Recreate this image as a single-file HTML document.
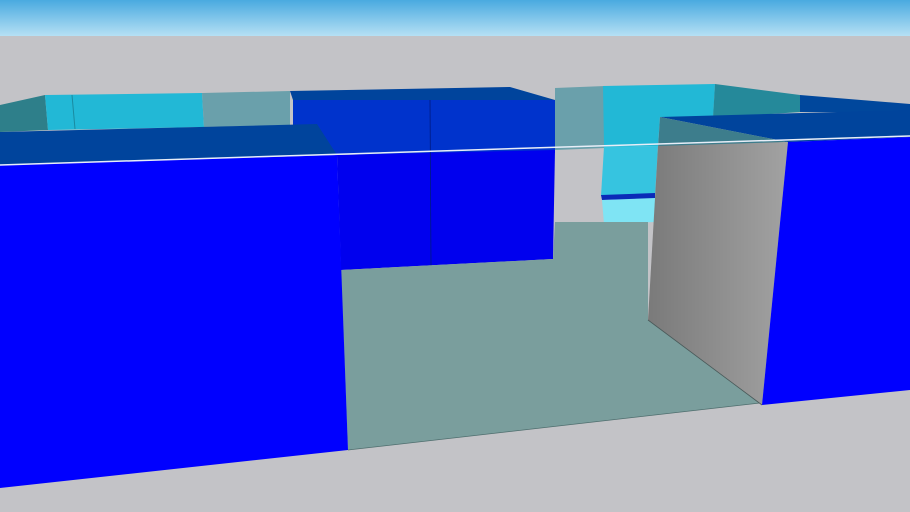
<!DOCTYPE html>
<html><head><style>html,body{margin:0;padding:0;width:910px;height:512px;overflow:hidden;background:#c3c3c7}</style></head>
<body>
<svg width="910" height="512" viewBox="0 0 910 512" xmlns="http://www.w3.org/2000/svg">
<defs>
<linearGradient id="sky" x1="0" y1="0" x2="0" y2="1"><stop offset="0" stop-color="#4aaae0"/><stop offset="1" stop-color="#b6e0f4"/></linearGradient>
<linearGradient id="gs" x1="0" y1="0" x2="1" y2="0"><stop offset="0" stop-color="#7a7a7a"/><stop offset="1" stop-color="#a2a2a2"/></linearGradient>
</defs>
<rect x="0" y="0" width="910" height="36" fill="url(#sky)"/>
<rect x="0" y="36" width="910" height="476" fill="#c3c3c7"/>
<!-- back walls -->
<polygon points="0,105 45,95 48,130 0,132" fill="#2e7f8a"/>
<polygon points="45,95 202,93 204,127 48,130" fill="#22b8d6"/>
<line x1="72" y1="95" x2="75" y2="129" stroke="#1a8aa0" stroke-width="1"/>
<polygon points="202,93 290,91 290,125 204,127" fill="#6aa0ab"/>
<polygon points="555,88 605,86 605,153 555,153" fill="#6aa0ab"/>
<polygon points="555,150 605,148 602,222 555,222" fill="#c3c3c7"/>
<polygon points="603,86 715,84 713,120 660,117 658,146 604,147" fill="#22b8d6"/>
<polygon points="604,147 658,146 655,196 601,196" fill="#36c4e0"/>
<polygon points="601,195 655,193 655,199 602,200" fill="#0a2ab8"/>
<polygon points="602,200 655,198 655,222 604,224" fill="#7fe4f4"/>
<polygon points="715,84 800,95 800,112 713,118" fill="#25899a"/>
<polygon points="800,95 910,104 910,112 800,112" fill="#00479c"/>
<!-- middle box -->
<polygon points="290,91 510,87 555,100 293,100" fill="#00449c"/>
<polygon points="293,100 555,100 555,153 293,155" fill="#0033cc"/>
<polygon points="337,155 555,150 553,259 341,270" fill="#0000ee"/>
<line x1="430" y1="100" x2="431" y2="266" stroke="#001a80" stroke-width="0.8"/>
<!-- floor -->
<polygon points="341,270 553,259 555,222 648,222 648,320 760,403 348,450" fill="#7a9e9d"/>
<line x1="348" y1="450" x2="760" y2="403" stroke="#4f6e6e" stroke-width="0.8"/>
<!-- left box -->
<polygon points="0,132 317,124 337,155 0,165" fill="#00449c"/>
<polygon points="0,165 337,155 348,450 0,488" fill="#0000ff"/>
<!-- right box -->
<polygon points="660,117 910,110 910,137 788,142" fill="#00449c"/>
<polygon points="660,117 788,142 658,148" fill="#3d7d8c"/>
<polygon points="658,146 788,142 762,405 648,320" fill="url(#gs)"/>
<line x1="648" y1="320" x2="762" y2="405" stroke="#4a5a5a" stroke-width="0.8"/>
<polygon points="788,142 910,137 910,390 762,405" fill="#0000ff"/>
<!-- white line -->
<line x1="0" y1="165" x2="910" y2="136" stroke="#e8eef8" stroke-width="1.5"/>
</svg>
</body></html>
